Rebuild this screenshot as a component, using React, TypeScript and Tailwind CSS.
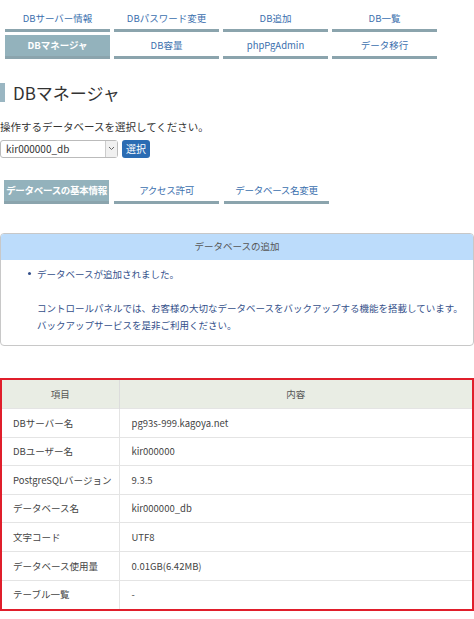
import React from 'react';

const font = { fontFamily: '"Noto Sans CJK JP", "Noto Sans", sans-serif' };

const navRows = [
  ['DBサーバー情報', 'DBパスワード変更', 'DB追加', 'DB一覧'],
  ['DBマネージャ', 'DB容量', 'phpPgAdmin', 'データ移行'],
];

const tabs = ['データベースの基本情報', 'アクセス許可', 'データベース名変更'];

const rows: [string, string][] = [
  ['DBサーバー名', 'pg93s-999.kagoya.net'],
  ['DBユーザー名', 'kir000000'],
  ['PostgreSQLバージョン', '9.3.5'],
  ['データベース名', 'kir000000_db'],
  ['文字コード', 'UTF8'],
  ['データベース使用量', '0.01GB(6.42MB)'],
  ['テーブル一覧', '-'],
];

export default function App() {
  return (
    <div className="w-[474px] h-[619px] bg-white overflow-hidden text-[#333]" style={font}>
      {/* Top nav */}
      <div className="pt-[8px] pl-[5px] flex flex-col gap-[3px]">
        {navRows.map((row, ri) => (
          <div key={ri} className="grid grid-cols-[105px_105px_105px_105px] gap-x-[4px]">
            {row.map((label) => {
              const active = label === 'DBマネージャ';
              return (
                <div
                  key={label}
                  className={`h-[24px] flex items-center justify-center whitespace-nowrap text-[9.5px] border-b-[3px] border-[#8ba4ad] ${
                    active ? 'bg-[#93b2bc] text-white font-bold' : 'text-[#3b6fae]'
                  }`}
                >
                  {label}
                </div>
              );
            })}
          </div>
        ))}
      </div>

      {/* Title */}
      <div className="mt-[23px] flex items-center h-[20px]">
        <div className="w-[5px] h-[19px] bg-[#9ab6c2]" />
        <h1 className="ml-[8px] text-[17px] leading-none text-[#333]">DBマネージャ</h1>
      </div>

      <p className="mt-[20px] text-[10.5px] leading-none">操作するデータベースを選択してください。</p>

      <div className="mt-[7px] flex items-center gap-[4px]">
        <div className="w-[118px] h-[18px] border border-[#bbb] rounded-[3px] flex items-center justify-between bg-white">
          <span className="pl-[5px] text-[10px] text-[#333]">kir000000_db</span>
          <span className="w-[12px] h-full border-l border-[#ccc] bg-[#f0f0f0] flex items-center justify-center">
            <svg width="7" height="5" viewBox="0 0 7 5">
              <path d="M1 1 L3.5 3.5 L6 1" stroke="#666" strokeWidth="1" fill="none" />
            </svg>
          </span>
        </div>
        <button className="w-[28px] h-[18px] rounded-[3px] bg-[#2b6cb3] text-white text-[10px] flex items-center justify-center">
          選択
        </button>
      </div>

      {/* Tabs */}
      <div className="mt-[22px] pl-[4px] flex gap-x-[5px]">
        {tabs.map((t, i) => (
          <div
            key={t}
            className={`w-[105px] h-[24px] flex items-center justify-center whitespace-nowrap tracking-[-0.3px] text-[9.5px] border-b-[3px] border-[#8ba4ad] ${
              i === 0 ? 'bg-[#93b2bc] text-white font-bold' : 'text-[#3b6fae]'
            }`}
          >
            {t}
          </div>
        ))}
      </div>

      {/* Notice box */}
      <div className="mt-[29px] w-[474px] border border-[#c8c8c8] rounded-[4px] overflow-hidden">
        <div className="h-[26px] bg-[#bcdcfb] flex items-center justify-center text-[9.5px] text-[#555]">
          データベースの追加
        </div>
        <div className="pl-[27px] pt-[4px] pb-[11px] text-[9.5px] text-[#34508a]">
          <div className="flex items-center leading-[20px]">
            <span className="w-[3px] h-[3px] rounded-full bg-[#34508a] mr-[6px]" />
            データベースが追加されました。
          </div>
          <div className="mt-[16px] pl-[9px] leading-[17px]">
            <div>コントロールパネルでは、お客様の大切なデータベースをバックアップする機能を搭載しています。</div>
            <div>バックアップサービスを是非ご利用ください。</div>
          </div>
        </div>
      </div>

      {/* Table */}
      <div className="mt-[32px] w-[474px] border-2 border-[#e01e2b]">
        <table className="w-full border-collapse text-[9.5px] text-[#444]">
          <thead>
            <tr className="h-[29px] bg-[#e9ede4]">
              <th className="w-[117px] font-normal text-[#555] border-r border-[#dcdcdc]">項目</th>
              <th className="font-normal text-[#555]">内容</th>
            </tr>
          </thead>
          <tbody>
            {rows.map(([k, v]) => (
              <tr key={k} className="h-[28.6px] border-t border-[#e4e4e4]">
                <td className="pl-[11px] border-r border-[#e4e4e4]">{k}</td>
                <td className="pl-[12px]">{v}</td>
              </tr>
            ))}
          </tbody>
        </table>
      </div>
    </div>
  );
}
